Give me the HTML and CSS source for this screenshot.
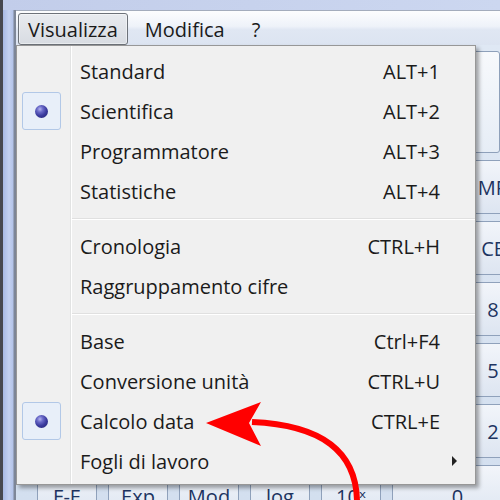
FILE: index.html
```html
<!DOCTYPE html>
<html lang="it">
<head>
<meta charset="utf-8">
<title>Calcolatrice</title>
<link rel="stylesheet" href="styles.css">
</head>
<body>
<div class="window">
  <div class="frame-top"></div>
  <div class="frame-body">
    <div class="frame-left"></div>
    <div class="client">
      <div class="menubar">
        <span class="mb-item active">Visualizza</span>
        <span class="mb-item">Modifica</span>
        <span class="mb-item">?</span>
      </div>
      <div class="calc">
        <div class="display"></div>
        <div class="keys">
          <div class="key"></div><div class="key"></div><div class="key"></div><div class="key"></div><div class="key"></div><div class="key"></div><div class="key">MR</div>
          <div class="key"></div><div class="key"></div><div class="key"></div><div class="key"></div><div class="key"></div><div class="key"></div><div class="key">CE</div>
          <div class="key"></div><div class="key"></div><div class="key"></div><div class="key"></div><div class="key"></div><div class="key"></div><div class="key">8</div>
          <div class="key"></div><div class="key"></div><div class="key"></div><div class="key"></div><div class="key"></div><div class="key"></div><div class="key">5</div>
          <div class="key"></div><div class="key"></div><div class="key"></div><div class="key"></div><div class="key"></div><div class="key"></div><div class="key">2</div>
          <div class="key low">F-E</div><div class="key low">Exp</div><div class="key low">Mod</div><div class="key low">log</div><div class="key low">10ˣ</div><div class="key low wide">0</div>
        </div>
      </div>
    </div>
  </div>
</div>

<div class="menu">
  <div class="mi"><span class="ic"></span><span class="lbl">Standard</span><span class="sc">ALT+1</span></div>
  <div class="mi"><span class="ic on"><span class="dot"></span></span><span class="lbl">Scientifica</span><span class="sc">ALT+2</span></div>
  <div class="mi"><span class="ic"></span><span class="lbl">Programmatore</span><span class="sc">ALT+3</span></div>
  <div class="mi"><span class="ic"></span><span class="lbl">Statistiche</span><span class="sc">ALT+4</span></div>
  <div class="sep"></div>
  <div class="mi"><span class="ic"></span><span class="lbl">Cronologia</span><span class="sc">CTRL+H</span></div>
  <div class="mi"><span class="ic"></span><span class="lbl">Raggruppamento cifre</span></div>
  <div class="sep"></div>
  <div class="mi"><span class="ic"></span><span class="lbl">Base</span><span class="sc">Ctrl+F4</span></div>
  <div class="mi"><span class="ic"></span><span class="lbl">Conversione unità</span><span class="sc">CTRL+U</span></div>
  <div class="mi"><span class="ic on"><span class="dot"></span></span><span class="lbl">Calcolo data</span><span class="sc">CTRL+E</span></div>
  <div class="mi"><span class="ic"></span><span class="lbl">Fogli di lavoro</span><span class="sub"></span></div>
</div>

<svg class="arrow" width="500" height="500" viewBox="0 0 500 500">
  <path d="M252 422 C320 425 358 450 357 505" fill="none" stroke="#ff0000" stroke-width="6"/>
  <polygon points="206,423 261,402 249,423 261,446" fill="#ff0000"/>
</svg>
</body>
</html>
```

FILE: styles.css
```css
html, body {
  margin: 0;
  padding: 0;
}

body {
  width: 500px;
  height: 500px;
  overflow: hidden;
  position: relative;
  font-family: "Open Sans", "Noto Sans", sans-serif;
}

.window {
  display: flex;
  flex-direction: column;
  width: 500px;
  height: 500px;
  box-sizing: border-box;
  border-left: 3px solid #47484e;
  background: #c6d1ec;
}

.frame-top {
  height: 10px;
  flex: none;
  background: linear-gradient(to right, #c2cdea, #ccd7f0);
}

.frame-body {
  flex: 1;
  display: flex;
  min-height: 0;
}

.frame-left {
  width: 13px;
  flex: none;
  background: linear-gradient(to right, #a8b9e3 0, #c4d1ef 6px, #b3c3e9 10px, #7e8798 11px, #7e8798 13px);
}

.client {
  flex: 1;
  min-width: 0;
  display: flex;
  flex-direction: column;
  overflow: hidden;
}

.menubar {
  height: 35px;
  flex: none;
  box-sizing: border-box;
  display: flex;
  align-items: flex-end;
  gap: 7px;
  padding-left: 2px;
  border-top: 1px solid #a3acbc;
  background: linear-gradient(#fcfdfe, #eef2f9 45%, #e0e7f3 55%, #dce4f1);
}

.mb-item {
  height: 32px;
  box-sizing: border-box;
  padding: 0 9px;
  border: 1px solid transparent;
  border-radius: 3px;
  display: flex;
  align-items: center;
  font-size: 20px;
  color: #1a1a1a;
}

.mb-item.active {
  border-color: #6d7279;
  background: linear-gradient(#e8ebef, #d8dce2);
  box-shadow: inset 0 0 0 1px rgba(255, 255, 255, 0.45);
}

.calc {
  flex: 1;
  min-height: 0;
  overflow: hidden;
  background: linear-gradient(#dfe8f4, #d3dfef);
}

.display {
  height: 100px;
  margin: 6px 0 7px 21px;
  border: 1px solid #8ea0ba;
  border-radius: 3px;
  background: linear-gradient(#f7f9fc, #e6edf6);
}

.keys {
  display: grid;
  grid-template-columns: repeat(7, 60px);
  grid-auto-rows: 54px;
  column-gap: 11px;
  row-gap: 7px;
  padding-left: 21px;
}

.key {
  box-sizing: border-box;
  border: 1px solid #8fa1bb;
  border-radius: 3px;
  background: linear-gradient(#f2f5fa, #dde5f1);
  display: flex;
  align-items: center;
  justify-content: center;
  font-size: 20px;
  color: #1d3461;
  white-space: nowrap;
}

.key.low {
  padding-top: 8px;
}

.key.wide {
  grid-column: span 2;
}

.menu {
  position: absolute;
  left: 16px;
  top: 45px;
  width: 460px;
  box-sizing: border-box;
  border: 1px solid #979797;
  padding: 5px 0 3px;
  background: linear-gradient(to right, #f0f0f0 53px, #e2e3e3 53px, #e2e3e3 54px, #ffffff 54px, #ffffff 55px, #f0f0f0 55px);
  box-shadow: 3px 3px 4px rgba(0, 0, 0, 0.35);
  font-size: 20px;
  color: #1b1b1b;
}

.mi {
  display: flex;
  align-items: center;
  height: 40px;
  padding: 0 18px 0 5px;
}

.ic {
  width: 39px;
  height: 38px;
  flex: none;
  box-sizing: border-box;
}

.ic.on {
  border: 1px solid #b2c8e7;
  border-radius: 3px;
  background: #e8eff9;
  display: flex;
  align-items: center;
  justify-content: center;
}

.dot {
  width: 13px;
  height: 13px;
  border-radius: 50%;
  background: radial-gradient(circle at 38% 32%, #b4b4ee 0, #6a6ac8 25%, #3b3b9e 55%, #22226e 100%);
}

.lbl {
  margin-left: 19px;
  flex: 1;
  white-space: nowrap;
}

.sc {
  padding-right: 17px;
  white-space: nowrap;
}

.sub {
  width: 0;
  height: 0;
  border-top: 5px solid transparent;
  border-bottom: 5px solid transparent;
  border-left: 5px solid #222222;
}

.sep {
  height: 15px;
  margin-left: 55px;
  background: linear-gradient(to bottom, transparent 7px, #e0e0e0 7px, #e0e0e0 8px, #ffffff 8px, #ffffff 9px, transparent 9px);
}

.arrow {
  position: absolute;
  left: 0;
  top: 0;
  pointer-events: none;
}
```
